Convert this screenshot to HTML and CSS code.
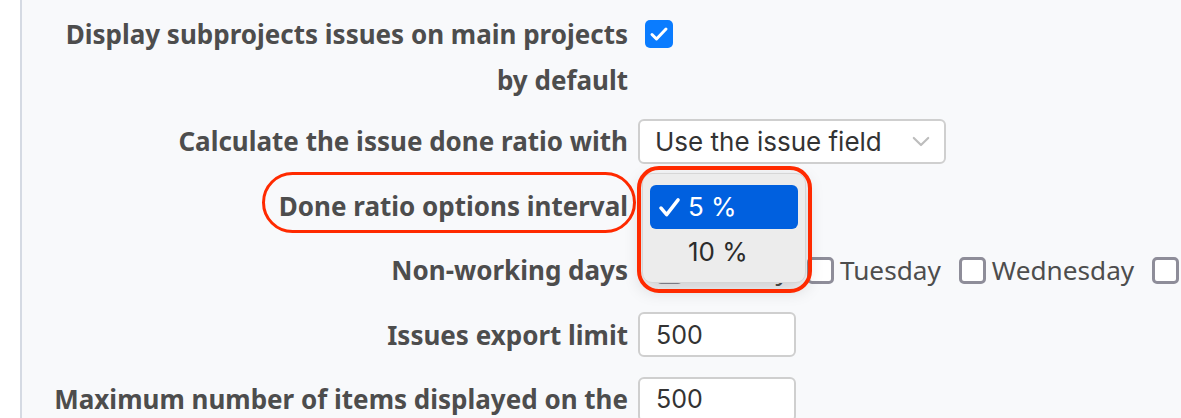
FILE: index.html
```html
<!DOCTYPE html>
<html lang="en">
<head>
  <meta charset="UTF-8" />
  <title>Settings - Issue tracking</title>
  <link rel="stylesheet" href="styles.css">
</head>
<body>

  <div class="page">
    <div class="settings">

      <!-- Subprojects -->
      <div class="row row-tall">
        <label class="label">Display subprojects issues on main projects by default</label>
        <div class="control">
          <span class="check checked">
            <svg viewBox="0 0 28 28" width="28" height="28"><path d="M7 14.5l4.5 4.5L21 9" fill="none" stroke="#fff" stroke-width="3" stroke-linecap="round" stroke-linejoin="round"/></svg>
          </span>
        </div>
      </div>

      <!-- Done ratio -->
      <div class="row">
        <label class="label">Calculate the issue done ratio with</label>
        <div class="control">
          <div class="select">
            <span>Use the issue field</span>
            <svg viewBox="0 0 20 12" width="18" height="11"><path d="M2 2l8 8 8-8" fill="none" stroke="#bdbdbd" stroke-width="2.4" stroke-linecap="round" stroke-linejoin="round"/></svg>
          </div>
        </div>
      </div>

      <!-- Interval (open dropdown) -->
      <div class="row">
        <span class="mark-label"></span>
        <label class="label">Done ratio options interval</label>
        <div class="control">
          <div class="popup">
            <div class="option selected">
              <svg class="tick" viewBox="0 0 24 22" width="23" height="21"><path d="M3 11.5l6 7L21 3" fill="none" stroke="#fff" stroke-width="3.6" stroke-linecap="round" stroke-linejoin="round"/></svg>
              5 %
            </div>
            <div class="option">10 %</div>
          </div>
          <span class="mark-popup"></span>
        </div>
      </div>

      <!-- Non-working days -->
      <div class="row">
        <label class="label">Non-working days</label>
        <div class="control days">
          <span class="day"><span class="check"></span>Monday</span>
          <span class="day"><span class="check"></span>Tuesday</span>
          <span class="day"><span class="check"></span>Wednesday</span>
          <span class="day"><span class="check"></span></span>
        </div>
      </div>

      <!-- Export limit -->
      <div class="row">
        <label class="label">Issues export limit</label>
        <div class="control"><div class="input">500</div></div>
      </div>

      <div class="row">
        <label class="label">Maximum number of items displayed on the</label>
        <div class="control"><div class="input">500</div></div>
      </div>

    </div>
  </div>

</body>
</html>
```

FILE: styles.css
```css
* {
  margin: 0;
  padding: 0;
  box-sizing: border-box;
}

body {
  background: #fff;
  font-family: 'Noto Sans', sans-serif;
  color: #4d4d4d;
  overflow: hidden;
}

.page {
  margin-left: 20px;
  border-left: 2px solid #d5dae3;
  background: #f8f9fb;
  height: 418px;
  overflow: hidden;
}

.settings {
  padding-top: 11px;
}

/* Rows */
.row {
  position: relative;
  display: grid;
  grid-template-columns: 606px 1fr;
  column-gap: 10px;
  align-items: center;
  height: 64.5px;
}

.row-tall {
  align-items: start;
  height: 98px;
}

.label {
  padding-left: 28px;
  text-align: right;
  font-weight: 700;
  font-size: 26px;
  line-height: 46px;
}

.control {
  position: relative;
  display: flex;
  align-items: center;
}

.row-tall .control {
  height: 46px;
  padding-left: 7px;
}

/* Checkboxes */
.check {
  display: inline-flex;
  width: 27px;
  height: 27px;
  border: 3px solid #8e8d99;
  border-radius: 5px;
  background: #fff;
  flex-shrink: 0;
}

.check.checked {
  width: 28px;
  height: 28px;
  border: none;
  background: #0a7cff;
}

.days {
  white-space: nowrap;
  overflow: hidden;
}

.day {
  display: inline-flex;
  align-items: center;
  gap: 6px;
  margin-left: 18px;
  font-size: 26.2px;
}

/* Select and inputs */
.select {
  display: flex;
  align-items: center;
  justify-content: space-between;
  width: 308px;
  height: 45px;
  padding: 0 14px 0 15px;
  background: #fff;
  border: 2px solid #cfcfcf;
  border-radius: 6px;
  font-family: Inter, sans-serif;
  font-size: 26px;
  color: #333;
}

.input {
  display: flex;
  align-items: center;
  width: 158px;
  height: 45px;
  padding-left: 16px;
  background: #fff;
  border: 2px solid #cfcfcf;
  border-radius: 6px;
  font-family: Inter, sans-serif;
  font-size: 25px;
  color: #333;
}

/* Open dropdown */
.popup {
  position: absolute;
  left: 4px;
  top: -33px;
  width: 164px;
  height: 110px;
  padding: 11px 7px;
  background: #ececec;
  border: 1px solid #d6d6d6;
  border-radius: 10px;
  box-shadow: 0 6px 18px rgba(0, 0, 0, 0.18);
  z-index: 2;
  font-family: Inter, sans-serif;
  font-size: 26px;
  color: #2b2b2b;
}

.option {
  position: relative;
  display: flex;
  align-items: center;
  height: 44px;
  padding-left: 38px;
  margin-bottom: 1px;
}

.option.selected {
  background: #0060df;
  border-radius: 6px;
  color: #fff;
}

.tick {
  position: absolute;
  left: 8px;
  top: 12px;
}

/* Annotation highlights */
.mark-label {
  position: absolute;
  left: 240px;
  top: -2px;
  width: 374px;
  height: 61px;
  border: 3px solid #ff2a00;
  border-radius: 31px;
}

.mark-popup {
  position: absolute;
  left: -1px;
  top: -40px;
  width: 175px;
  height: 127px;
  border: 4px solid #ff2a00;
  border-radius: 22px;
  z-index: 3;
}
```
